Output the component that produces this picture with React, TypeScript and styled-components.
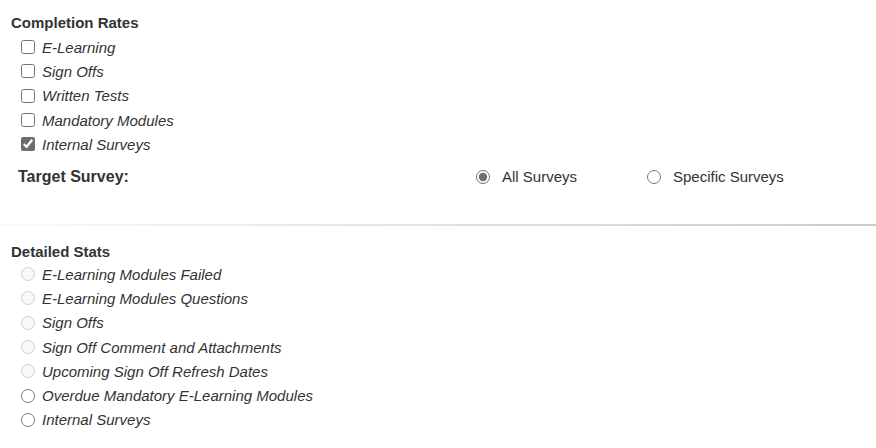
import * as React from "react";
import styled, { createGlobalStyle } from "styled-components";

const GlobalStyle = createGlobalStyle`
    html, body {
        margin: 0;
        padding: 0;
        background: #ffffff;
    }

    body {
        font-family: "Liberation Sans", Arial, Helvetica, sans-serif;
        color: #333333;
    }
`;

const Page = styled.div`
    display: flex;
    flex-direction: column;
    width: 876px;
    padding-top: 13px;
`;

const Section = styled.section<{ $top?: number }>`
    display: flex;
    flex-direction: column;
    padding-left: 11px;
    margin-top: ${(p) => p.$top ?? 0}px;
`;

const SectionTitle = styled.div`
    font-size: 15px;
    font-weight: 700;
    line-height: 20px;
    color: #333333;
`;

const OptionList = styled.div<{ $offset?: number }>`
    display: flex;
    flex-direction: column;
    padding-left: 10px;
    margin-top: ${(p) => p.$offset ?? 0}px;
`;

const OptionRow = styled.label`
    display: flex;
    align-items: center;
    gap: 7px;
    height: 24.3px;
    font-size: 15px;
    font-style: italic;
    color: #333333;
`;

const Box = styled.input`
    width: 14px;
    height: 14px;
    margin: 0;
    accent-color: #6e6e6e;
`;

const TargetRow = styled.div`
    display: grid;
    grid-template-columns: 458px 171px auto;
    align-items: center;
    height: 30px;
    margin-top: 5.5px;
    padding-left: 18px;
`;

const TargetLabel = styled.div`
    font-size: 16px;
    font-weight: 700;
    color: #333333;
`;

const Choice = styled.label`
    display: flex;
    align-items: center;
    gap: 12px;
    font-size: 15px;
    color: #333333;
`;

const Divider = styled.div`
    height: 2px;
    margin-top: 32px;
    background: linear-gradient(to right, #fafafa 0%, #e6e6e6 40%, #cccccc 100%);
`;

const completion = [
    { label: "E-Learning", checked: false },
    { label: "Sign Offs", checked: false },
    { label: "Written Tests", checked: false },
    { label: "Mandatory Modules", checked: false },
    { label: "Internal Surveys", checked: true },
];

const detailed = [
    { label: "E-Learning Modules Failed", disabled: true },
    { label: "E-Learning Modules Questions", disabled: true },
    { label: "Sign Offs", disabled: true },
    { label: "Sign Off Comment and Attachments", disabled: true },
    { label: "Upcoming Sign Off Refresh Dates", disabled: true },
    { label: "Overdue Mandatory E-Learning Modules", disabled: false },
    { label: "Internal Surveys", disabled: false },
];

function App() {
    return (
        <Page>
            <GlobalStyle />
            <Section>
                <SectionTitle>Completion Rates</SectionTitle>
                <OptionList $offset={2}>
                    {completion.map((item) => (
                        <OptionRow key={item.label}>
                            <Box type="checkbox" defaultChecked={item.checked} />
                            {item.label}
                        </OptionRow>
                    ))}
                </OptionList>
            </Section>
            <TargetRow>
                <TargetLabel>Target Survey:</TargetLabel>
                <Choice>
                    <Box type="radio" name="target" defaultChecked />
                    All Surveys
                </Choice>
                <Choice>
                    <Box type="radio" name="target" />
                    Specific Surveys
                </Choice>
            </TargetRow>
            <Divider />
            <Section $top={16}>
                <SectionTitle>Detailed Stats</SectionTitle>
                <OptionList>
                    {detailed.map((item) => (
                        <OptionRow key={item.label}>
                            <Box type="radio" name="detailed" disabled={item.disabled} />
                            {item.label}
                        </OptionRow>
                    ))}
                </OptionList>
            </Section>
        </Page>
    );
}

export default App;
